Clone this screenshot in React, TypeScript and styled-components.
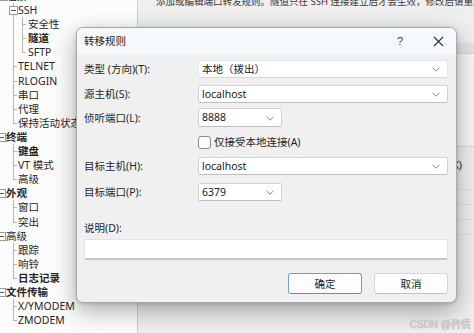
import React from 'react'
import styled, { createGlobalStyle } from 'styled-components'

const GlobalStyle = createGlobalStyle`
  html, body {
    margin: 0;
    padding: 0;
    background: #f0f0f0;
  }
  body {
    font-family: 'Noto Sans', 'Noto Sans CJK SC', sans-serif;
    font-size: 10.5px;
    color: #1f1f1f;
  }
`

type TreeItem = {
  text: string
  level: 0 | 1 | 2
  box?: boolean
  bold?: boolean
  last?: boolean
}

const tree: TreeItem[] = [
  { text: '连接', level: 0, box: true },
  { text: 'SSH', level: 1, box: true },
  { text: '安全性', level: 2 },
  { text: '隧道', level: 2, bold: true },
  { text: 'SFTP', level: 2, last: true },
  { text: 'TELNET', level: 1 },
  { text: 'RLOGIN', level: 1 },
  { text: '串口', level: 1 },
  { text: '代理', level: 1 },
  { text: '保持活动状态', level: 1, last: true },
  { text: '终端', level: 0, box: true, bold: true },
  { text: '键盘', level: 1, bold: true },
  { text: 'VT 模式', level: 1 },
  { text: '高级', level: 1, last: true },
  { text: '外观', level: 0, box: true, bold: true },
  { text: '窗口', level: 1 },
  { text: '突出', level: 1, last: true },
  { text: '高级', level: 0, box: true },
  { text: '跟踪', level: 1 },
  { text: '响铃', level: 1 },
  { text: '日志记录', level: 1, bold: true, last: true },
  { text: '文件传输', level: 0, box: true, bold: true },
  { text: 'X/YMODEM', level: 1 },
  { text: 'ZMODEM', level: 1, last: true },
]

const indent = { 0: 6, 1: 18, 2: 28 }
const lineX = { 0: 0, 1: 13, 2: 22 }

const App = () => {
  return (
    <>
      <GlobalStyle />
      <Screen>
        <TreePane>
          <TreeList>
            {tree.map((item, i) => (
              <TreeRow
                key={i}
                $level={item.level}
                $bold={!!item.bold}
                $last={!!item.last}
                $box={!!item.box}
              >
                {item.box && <Expander $level={item.level} />}
                {item.text}
              </TreeRow>
            ))}
          </TreeList>
        </TreePane>

        <RightPane>
          <Hint>添加或编辑端口转发规则。隧道只在 SSH 连接建立后才会生效，修改后请重新连接。</Hint>
          <RuleTable>
            <RuleHeader />
          </RuleTable>
          <SideButtons>
            <span>删除(X)</span>
          </SideButtons>
          <ExtraList>
            <li />
            <li />
            <li />
            <li />
          </ExtraList>
        </RightPane>

        <Dialog>
          <TitleBar>
            <Title>转移规则</Title>
            <HelpButton>?</HelpButton>
            <CloseButton>
              <svg width="11" height="11" viewBox="0 0 11 11">
                <path d="M1 1 L10 10 M10 1 L1 10" stroke="#333" strokeWidth="1.1" fill="none" />
              </svg>
            </CloseButton>
          </TitleBar>

          <Body>
            <FieldRow $top={6} $h={18}>
              <Label>类型 (方向)(T):</Label>
              <Combo $flat>
                本地（拨出）
                <Chevron />
              </Combo>
            </FieldRow>
            <FieldRow $top={7} $h={18}>
              <Label>源主机(S):</Label>
              <Combo>
                localhost
                <Chevron />
              </Combo>
            </FieldRow>
            <FieldRow $top={5} $h={19}>
              <Label>侦听端口(L):</Label>
              <Combo $narrow>
                8888
                <Chevron />
              </Combo>
            </FieldRow>
            <FieldRow $top={7} $h={16}>
              <span />
              <CheckLine>
                <CheckBox />
                仅接受本地连接(A)
              </CheckLine>
            </FieldRow>
            <FieldRow $top={7} $h={18}>
              <Label>目标主机(H):</Label>
              <Combo>
                localhost
                <Chevron />
              </Combo>
            </FieldRow>
            <FieldRow $top={8} $h={18}>
              <Label>目标端口(P):</Label>
              <Combo $narrow>
                6379
                <Chevron />
              </Combo>
            </FieldRow>
            <NoteLabel>说明(D):</NoteLabel>
            <NoteInput />
            <ButtonRow>
              <DialogButton $primary>确定</DialogButton>
              <DialogButton>取消</DialogButton>
            </ButtonRow>
          </Body>
        </Dialog>

        <Watermark>CSDN @矜情</Watermark>
      </Screen>
    </>
  )
}

const Chevron = () => (
  <ChevronIcon width="8" height="5" viewBox="0 0 8 5">
    <path d="M0.5 0.8 L4 4.2 L7.5 0.8" stroke="#8a8a8a" strokeWidth="1" fill="none" />
  </ChevronIcon>
)

export default App

const Screen = styled.div`
  position: relative;
  width: 474px;
  height: 333px;
  overflow: hidden;
  display: flex;
`

const TreePane = styled.div`
  width: 137px;
  flex: 0 0 137px;
  background: #fcfcfc;
  border-right: 1px solid #cfcfcf;
  overflow: hidden;
`

const TreeList = styled.div`
  margin-top: -11px;
`

const TreeRow = styled.div<{ $level: 0 | 1 | 2; $bold: boolean; $last: boolean; $box: boolean }>`
  position: relative;
  height: 14.1px;
  line-height: 14px;
  font-size: 10.5px;
  padding-left: ${(p) => indent[p.$level]}px;
  font-weight: ${(p) => (p.$bold ? 700 : 400)};
  color: #262626;
  white-space: nowrap;
  background: ${(p) =>
    p.$level === 2
      ? 'linear-gradient(#b5b5b5, #b5b5b5) no-repeat 13px 0 / 1px 100%'
      : 'none'};

  &::before {
    content: '';
    display: ${(p) => (p.$level === 0 ? 'none' : 'block')};
    position: absolute;
    left: ${(p) => lineX[p.$level]}px;
    top: 0;
    width: 1px;
    height: ${(p) => (p.$last ? '50%' : '100%')};
    background: #b5b5b5;
  }

  &::after {
    content: '';
    display: ${(p) => (p.$level === 0 || p.$box ? 'none' : 'block')};
    position: absolute;
    left: ${(p) => lineX[p.$level]}px;
    top: 7px;
    width: 4px;
    height: 1px;
    background: #b5b5b5;
  }
`

const Expander = styled.span<{ $level: 0 | 1 | 2 }>`
  position: absolute;
  z-index: 1;
  top: 3px;
  left: ${(p) => (p.$level === 0 ? -3 : 9)}px;
  width: 7px;
  height: 7px;
  border: 1px solid #9a9a9a;
  background: #fff;

  &::after {
    content: '';
    position: absolute;
    left: 1px;
    right: 1px;
    top: 3px;
    height: 1px;
    background: #555;
  }
`

const RightPane = styled.div`
  flex: 1;
  background: #efefef;
  display: flex;
  flex-direction: column;
  overflow: hidden;
`

const Hint = styled.div`
  margin-top: -4px;
  padding-left: 18px;
  font-size: 9.5px;
  line-height: 12px;
  color: #3a3a3a;
  white-space: nowrap;
`

const RuleTable = styled.div`
  margin: 35px 0 0 12px;
  height: 103px;
  background: #f7f7f7;
  border-bottom: 1px solid #d9d9d9;
`

const RuleHeader = styled.div`
  height: 10px;
  background: #e4e4e4;
  border-bottom: 1px solid #d6d6d6;
`

const SideButtons = styled.div`
  display: flex;
  justify-content: flex-end;
  padding: 10px 12px 0 0;
  height: 16px;
  line-height: 16px;
  font-size: 10.5px;
  color: #222;
`

const ExtraList = styled.ul`
  list-style: none;
  margin: 2px 0 0 12px;
  padding: 0;

  li {
    height: 14px;
    border-bottom: 1px solid #e0e0e0;
  }
`

const Dialog = styled.div`
  position: absolute;
  left: 76px;
  top: 27px;
  width: 381px;
  height: 276px;
  box-sizing: border-box;
  border: 1px solid #a8a8a8;
  border-radius: 7px;
  background: #f0f0f0;
  box-shadow: 0 8px 24px rgba(0, 0, 0, 0.32), 0 1px 4px rgba(0, 0, 0, 0.15);
  overflow: hidden;
  display: flex;
  flex-direction: column;
`

const TitleBar = styled.div`
  height: 26px;
  flex: 0 0 26px;
  display: flex;
  align-items: center;
  background: #f5f8fc;
  padding-left: 7px;
`

const Title = styled.div`
  flex: 1;
  font-size: 10.5px;
  line-height: 14px;
  color: #1a1a1a;
`

const HelpButton = styled.div`
  width: 30px;
  text-align: center;
  font-family: 'Liberation Sans', sans-serif;
  font-size: 11px;
  color: #444;
`

const CloseButton = styled.div`
  width: 36px;
  margin-left: 5px;
  display: flex;
  align-items: center;
  justify-content: center;
`

const Body = styled.div`
  flex: 1;
  display: flex;
  flex-direction: column;
  padding: 0 8px 0 7px;
`

const FieldRow = styled.div<{ $top: number; $h: number }>`
  display: grid;
  grid-template-columns: 114px 1fr;
  align-items: center;
  margin-top: ${(p) => p.$top}px;
  height: ${(p) => p.$h}px;
`

const Label = styled.div`
  font-size: 10.5px;
  line-height: 14px;
  white-space: nowrap;
  color: #1f1f1f;
`

const Combo = styled.div<{ $narrow?: boolean; $flat?: boolean }>`
  position: relative;
  box-sizing: border-box;
  height: 100%;
  width: ${(p) => (p.$narrow ? '84px' : '100%')};
  background: #fff;
  border: 1px solid ${(p) => (p.$flat ? '#e6e6e6' : '#d2d2d2')};
  border-bottom-color: ${(p) => (p.$flat ? '#d8d8d8' : '#bdbdbd')};
  border-radius: 2px;
  padding-left: 3px;
  font-size: 10.5px;
  line-height: 15px;
  color: #1a1a1a;
  display: flex;
  align-items: center;
`

const ChevronIcon = styled.svg`
  position: absolute;
  right: 7px;
  top: 50%;
  margin-top: -2px;
`

const CheckLine = styled.div`
  display: flex;
  align-items: center;
  gap: 3px;
  font-size: 10.5px;
  line-height: 14px;
  white-space: nowrap;
`

const CheckBox = styled.span`
  box-sizing: border-box;
  width: 13px;
  height: 13px;
  border: 1px solid #8c8c8c;
  border-radius: 3px;
  background: #fbfbfb;
`

const NoteLabel = styled.div`
  margin-top: 19px;
  height: 16px;
  line-height: 16px;
  font-size: 10.5px;
`

const NoteInput = styled.div`
  margin-top: 3px;
  height: 21px;
  box-sizing: border-box;
  background: #fff;
  border: 1px solid #e2e2e2;
  border-bottom: 2px solid #c6c6c6;
  border-radius: 2px;
`

const ButtonRow = styled.div`
  margin-top: 13px;
  display: flex;
  justify-content: flex-end;
  gap: 12px;
`

const DialogButton = styled.div<{ $primary?: boolean }>`
  box-sizing: border-box;
  width: 74px;
  height: 21px;
  display: flex;
  align-items: center;
  justify-content: center;
  font-size: 10.5px;
  background: #fdfdfd;
  border: 1px solid ${(p) => (p.$primary ? '#6f9fd6' : '#d6d6d6')};
  border-bottom-color: ${(p) => (p.$primary ? '#5b8fcc' : '#c2c2c2')};
  border-radius: 3px;
  color: #1a1a1a;
`

const Watermark = styled.div`
  position: absolute;
  right: 3px;
  bottom: 2px;
  font-family: 'Liberation Sans', 'Noto Sans CJK SC', sans-serif;
  font-size: 10px;
  color: #d0d0d0;
  text-shadow: 0 0 1px #9a9a9a;
`
